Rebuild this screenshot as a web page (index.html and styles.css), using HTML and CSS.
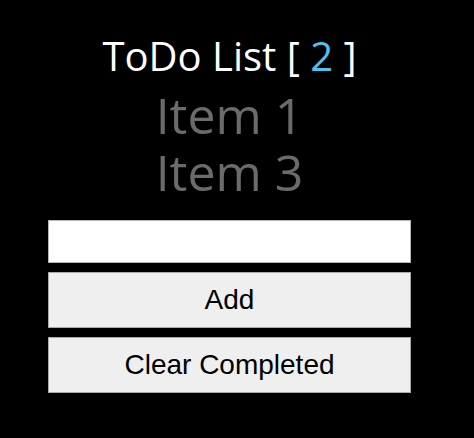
FILE: index.html
```html
<!DOCTYPE html>
<html lang="en">
<head>
    <meta charset="UTF-8">
    <title>ToDo List</title>
    <link rel="stylesheet" href="styles.css">
</head>
<body>

<div class="app">
    <h1 class="title">ToDo List [ <span class="count">2</span> ]</h1>
    <ul class="todo-list">
        <li>Item 1</li>
        <li>Item 3</li>
    </ul>
    <input type="text" class="todo-input">
    <button class="btn">Add</button>
    <button class="btn">Clear Completed</button>
</div>

</body>
</html>
```

FILE: styles.css
```css
body {
    margin: 0;
    background-color: #000;
    font-family: "Open Sans", sans-serif;
}

.app {
    width: 363px;
    margin-left: 48px;
    padding-top: 24px;
    display: flex;
    flex-direction: column;
    text-align: center;
}

.title {
    margin: 0;
    color: #fff;
    font-size: 40px;
    font-weight: 400;
    line-height: 63px;
}

.count {
    color: #4fc3f0;
}

.todo-list {
    list-style: none;
    margin: 0;
    padding: 0;
    color: #6b6b6b;
    font-size: 50px;
    line-height: 57px;
}

.todo-input {
    box-sizing: border-box;
    height: 43px;
    margin: 19px 0 0 0;
    border: 1px solid #b5b5b5;
    background: #fff;
}

.btn {
    box-sizing: border-box;
    height: 56px;
    margin-top: 9px;
    background-color: #efefef;
    border: 1px solid #a9a9a9;
    color: #000;
    font-family: "Liberation Sans", Arial, sans-serif;
    font-size: 28px;
}
```
